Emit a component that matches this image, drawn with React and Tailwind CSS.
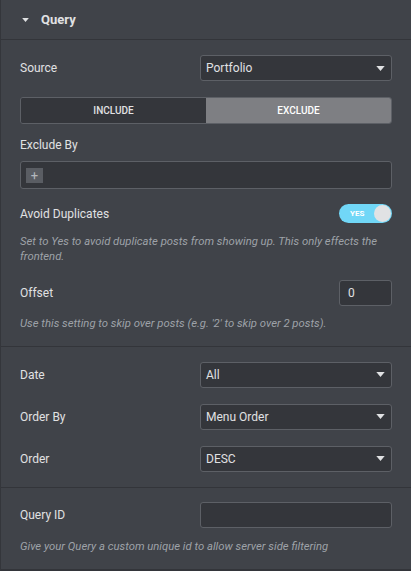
import { useState } from "react";

// small filled triangle used for the section caret and the select arrows
function Caret({ className }) {
  return (
    <svg viewBox="0 0 10 6" className={className} fill="currentColor">
      <path d="M0 0h10L5 6z" />
    </svg>
  );
}

function Select({ value }) {
  return (
    <div className="flex h-[26px] w-[192px] items-center justify-between rounded-[3px] border border-[#5d6066] bg-[#34363b] pl-[5px] pr-[6px] text-[12px] text-[#e0e1e3]">
      <span>{value}</span>
      <Caret className="h-[5px] w-[9px] text-[#e0e1e3]" />
    </div>
  );
}

function Row({ label, children, className = "" }) {
  return (
    <div className={"flex items-center justify-between " + className}>
      <span className="text-[12px] text-[#e0e1e3]">{label}</span>
      {children}
    </div>
  );
}

function Desc({ children, className = "" }) {
  return (
    <p className={"text-[11.3px] italic leading-[14.5px] text-[#9ea2a8] " + className}>
      {children}
    </p>
  );
}

export default function App() {
  const [mode, setMode] = useState("exclude");
  const [avoid, setAvoid] = useState(true);

  return (
    <div
      className="h-[571px] w-[411px] overflow-hidden border-l border-[#34363b] bg-[#404349]"
      style={{ fontFamily: "Roboto, 'Liberation Sans', sans-serif" }}
    >
      {/* header */}
      <div className="flex h-[40px] items-center border-b border-[#33353a] pl-[21px]">
        <Caret className="h-[4px] w-[7px] text-[#e0e1e3]" />
        <span className="ml-[12px] text-[13px] font-bold text-[#e0e1e3]">Query</span>
      </div>

      {/* section 1 */}
      <div className="flex flex-col border-b border-[#33353a] pl-[19px] pr-[19px] pt-[15px] pb-[14px]">
        <Row label="Source">
          <Select value="Portfolio" />
        </Row>

        <div className="mt-[16px] flex h-[27px] overflow-hidden rounded-[3px] border border-[#5d6066] text-[10px] font-medium">
          <button
            onClick={() => setMode("include")}
            className={
              "flex-1 " +
              (mode === "include" ? "bg-[#7e7f83] text-white" : "bg-[#34363b] text-[#e0e1e3]")
            }
          >
            INCLUDE
          </button>
          <button
            onClick={() => setMode("exclude")}
            className={
              "flex-1 " +
              (mode === "exclude" ? "bg-[#7e7f83] text-white" : "bg-[#34363b] text-[#e0e1e3]")
            }
          >
            EXCLUDE
          </button>
        </div>

        <span className="mt-[14px] text-[12px] leading-[14px] text-[#e0e1e3]">Exclude By</span>

        <div className="mt-[9px] flex h-[28px] items-center rounded-[3px] border border-[#5d6066] bg-[#34363b] pl-[5px]">
          <div className="flex h-[15px] w-[17px] items-center justify-center bg-[#5a5d63] text-[13px] leading-none text-[#b4b7bc]">
            +
          </div>
        </div>

        <Row label="Avoid Duplicates" className="mt-[15px]">
          <button
            onClick={() => setAvoid(!avoid)}
            className={
              "relative flex h-[19px] w-[53px] items-center rounded-full " +
              (avoid ? "bg-[#71d7f7]" : "bg-[#5d6066]")
            }
          >
            <span className="ml-[11px] text-[8px] font-bold text-white">{avoid ? "YES" : ""}</span>
            <span
              className={
                "absolute top-[1px] h-[17px] w-[17px] rounded-full bg-[#e1e2e4] " +
                (avoid ? "right-[1px]" : "left-[1px]")
              }
            />
          </button>
        </Row>

        <Desc className="mt-[12px]">
          Set to Yes to avoid duplicate posts from showing up. This only effects the frontend.
        </Desc>

        <Row label="Offset" className="mt-[16px]">
          <div className="flex h-[26px] w-[53px] items-center rounded-[3px] border border-[#5d6066] bg-[#34363b] pl-[8px] text-[12px] text-[#e0e1e3]">
            0
          </div>
        </Row>

        <Desc className="mt-[11px]">
          Use this setting to skip over posts (e.g. '2' to skip over 2 posts).
        </Desc>
      </div>

      {/* section 2 */}
      <div className="flex flex-col gap-[16px] border-b border-[#33353a] pl-[19px] pr-[19px] pt-[15px] pb-[15px]">
        <Row label="Date">
          <Select value="All" />
        </Row>
        <Row label="Order By">
          <Select value="Menu Order" />
        </Row>
        <Row label="Order">
          <Select value="DESC" />
        </Row>
      </div>

      {/* section 3 */}
      <div className="flex h-[84px] flex-col border-b-[3px] border-[#33353a] pl-[19px] pr-[19px] pt-[14px]">
        <Row label="Query ID">
          <div className="h-[26px] w-[192px] rounded-[3px] border border-[#5d6066] bg-[#34363b]" />
        </Row>
        <Desc className="mt-[12px]">
          Give your Query a custom unique id to allow server side filtering
        </Desc>
      </div>
    </div>
  );
}
